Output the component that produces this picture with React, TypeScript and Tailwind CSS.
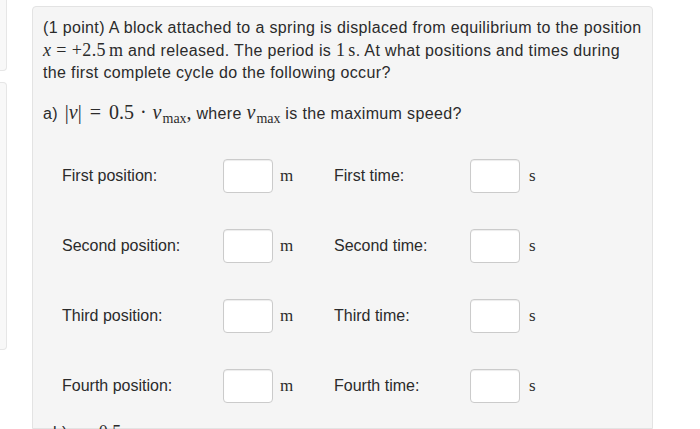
const rows = [
  ['First position:', 'First time:'],
  ['Second position:', 'Second time:'],
  ['Third position:', 'Third time:'],
  ['Fourth position:', 'Fourth time:'],
]

const Serif = ({ children, italic, size = 'text-[18px]' }: { children: React.ReactNode; italic?: boolean; size?: string }) => (
  <span className={`font-['Liberation_Serif',serif] ${size} ${italic ? 'italic' : ''}`}>
    {children}
  </span>
)

const Sub = () => (
  <span className="relative top-[4px] ml-[1px] font-['Liberation_Serif',serif] text-[14px]">max</span>
)

const AnswerBox = () => (
  <input
    type="text"
    className="h-[34px] w-[50px] rounded-[4px] border border-[#cbcbcb] bg-white shadow-[inset_0_1px_1px_rgba(0,0,0,0.075)] outline-none"
  />
)

export default function App() {
  return (
    <div className="flex h-[429px] w-[700px] overflow-hidden bg-white font-['Liberation_Sans',Arial,sans-serif] text-[16px] leading-[22px] text-[#2b2b2b]">
      {/* side panels cut off at the left edge */}
      <div className="flex w-[7px] shrink-0 flex-col">
        <div className="h-[71px] rounded-br-[4px] border-r border-b border-[#e6e6e6] bg-[#f8f8f8]" />
        <div className="mt-[11px] h-[268px] rounded-r-[4px] border-y border-r border-[#e6e6e6] bg-[#f8f8f8]" />
      </div>

      <div className="ml-[25px] mt-[6px] w-[621px] shrink-0 rounded-t-[4px] border border-[#e3e3e3] bg-[#f5f5f5] pl-[10px] pr-[10px] pt-[10px]">
        <p className="tracking-[0.35px]">
          (1 point) A block attached to a spring is displaced from equilibrium to the position
          <br />
          <Serif italic>x</Serif>
          <span className="mx-[5px]">
            <Serif>=</Serif>
          </span>
          <Serif>+2.5</Serif>
          <span className="ml-[3px]">
            <Serif>m</Serif>
          </span>{' '}
          and released. The period is <Serif>1</Serif>
          <span className="ml-[3px]">
            <Serif>s</Serif>
          </span>
          . At what positions and times during
          <br />
          the first complete cycle do the following occur?
        </p>

        <p className="mt-[17px] tracking-[0.35px]">
          a){' '}
          <span className="ml-[2px] tracking-normal">
            <Serif size="text-[20px]">|</Serif>
            <Serif italic size="text-[20px]">v</Serif>
            <Serif size="text-[20px]">|</Serif>
            <span className="mx-[8px]">
              <Serif size="text-[20px]">=</Serif>
            </span>
            <Serif size="text-[20px]">0.5</Serif>
            <span className="mx-[6px]">
              <Serif size="text-[20px]">·</Serif>
            </span>
            <Serif italic size="text-[20px]">v</Serif>
            <Sub />
            <Serif size="text-[20px]">,</Serif>
          </span>{' '}
          where{' '}
          <span className="tracking-normal">
            <Serif italic size="text-[20px]">v</Serif>
            <Sub />
          </span>{' '}
          is the maximum speed?
        </p>

        <div className="mt-[15px] grid grid-cols-[161px_50px_61px_136px_50px_1fr] pl-[19px]">
          {rows.map(([pos, time]) => (
            <div key={pos} className="contents">
              <div className="flex h-[70px] items-center">{pos}</div>
              <div className="flex h-[70px] items-center">
                <AnswerBox />
              </div>
              <div className="flex h-[70px] items-center pl-[7px] font-['Liberation_Serif',serif] text-[17px]">m</div>
              <div className="flex h-[70px] items-center">{time}</div>
              <div className="flex h-[70px] items-center">
                <AnswerBox />
              </div>
              <div className="flex h-[70px] items-center pl-[9px] font-['Liberation_Serif',serif] text-[17px]">s</div>
            </div>
          ))}
        </div>

        <p className="pl-[10px]">
          b) <Serif italic>v</Serif> <Serif>= 0.5 · </Serif>
          <Serif italic>v</Serif>
        </p>
      </div>
    </div>
  )
}
